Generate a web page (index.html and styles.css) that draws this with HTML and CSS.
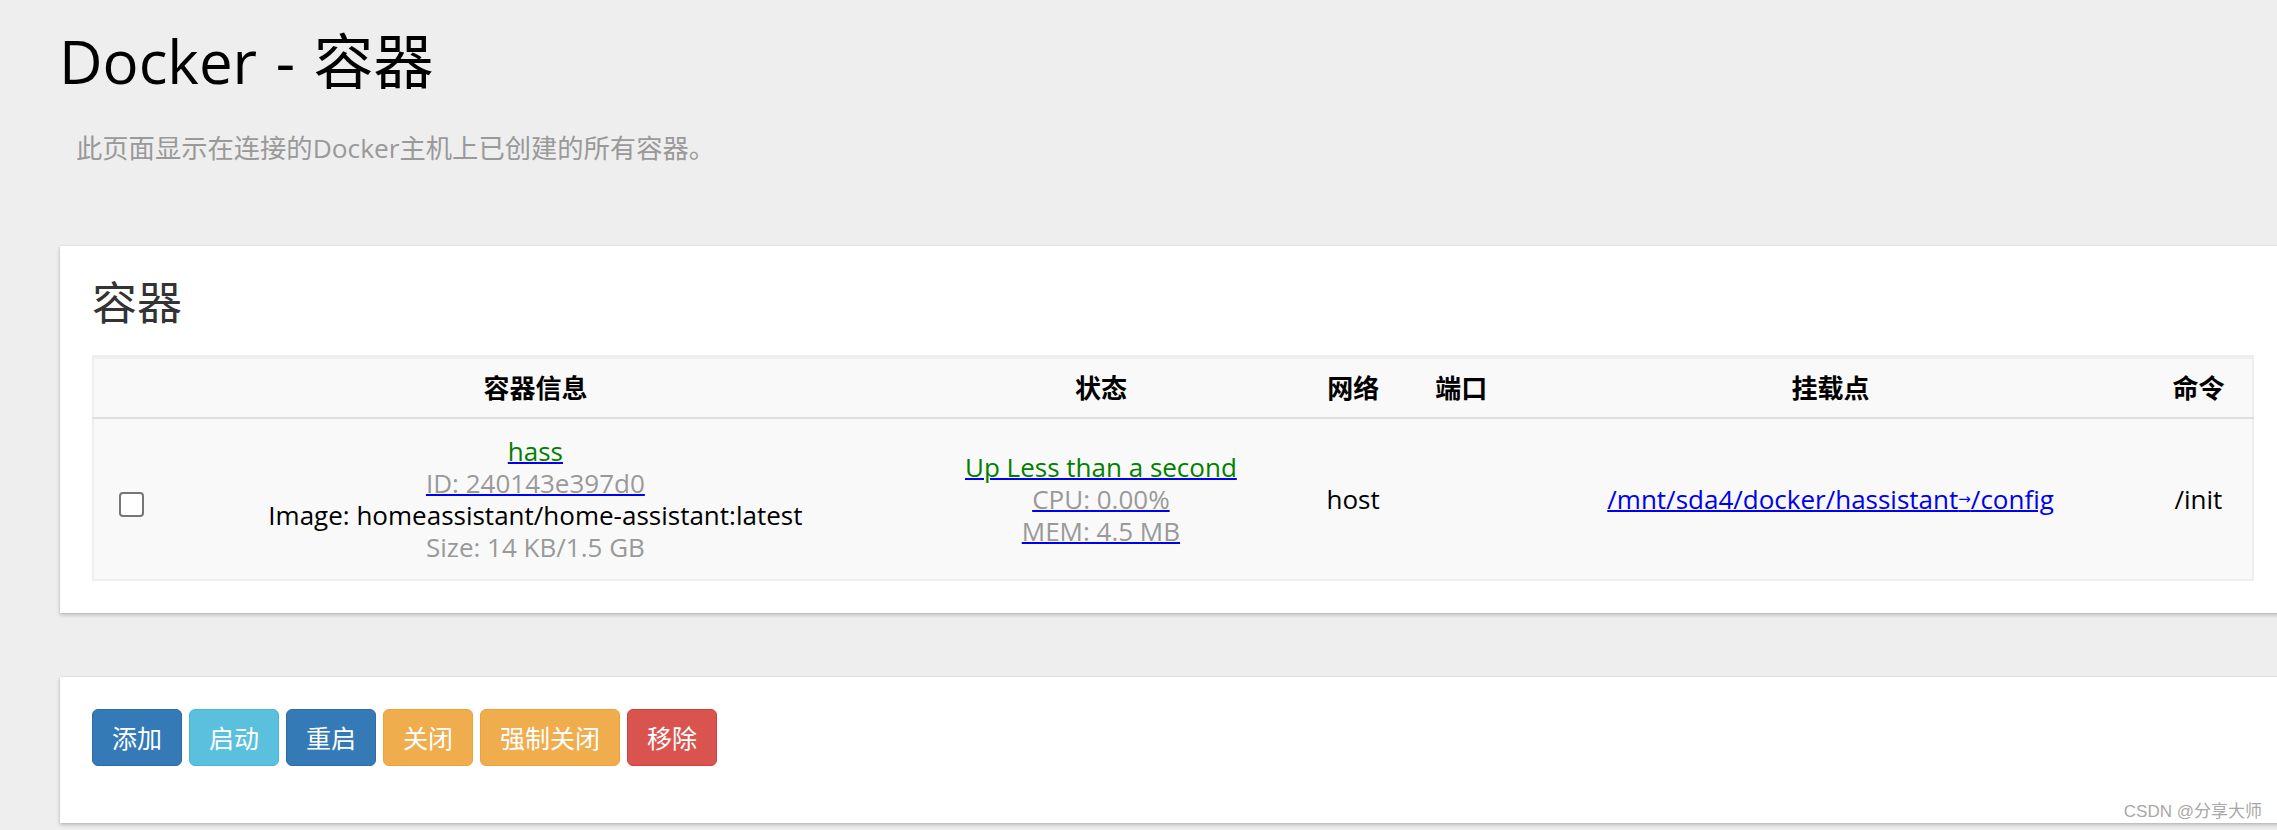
FILE: index.html
```html
<!DOCTYPE html>
<html lang="zh-CN">
<head>
<meta charset="utf-8">
<title>Docker - 容器</title>
<link rel="stylesheet" href="styles.css">
</head>
<body>
<div class="page">
  <h1 class="title">Docker - 容器</h1>
  <p class="subtitle">此页面显示在连接的Docker主机上已创建的所有容器。</p>

  <div class="card">
    <h3 class="card-title">容器</h3>
    <table class="tbl">
      <colgroup>
        <col class="c0"><col class="c1"><col class="c2"><col class="c3"><col class="c4"><col class="c5"><col class="c6">
      </colgroup>
      <thead>
        <tr>
          <th></th>
          <th>容器信息</th>
          <th>状态</th>
          <th>网络</th>
          <th>端口</th>
          <th>挂载点</th>
          <th>命令</th>
        </tr>
      </thead>
      <tbody>
        <tr>
          <td><input type="checkbox" class="chk"></td>
          <td>
            <div><a class="lnk" href="#"><span class="green">hass</span></a></div>
            <div><a class="lnk" href="#"><span class="muted">ID: 240143e397d0</span></a></div>
            <div>Image: homeassistant/home-assistant:latest</div>
            <div class="muted">Size: 14 KB/1.5 GB</div>
          </td>
          <td>
            <div><a class="lnk" href="#"><span class="green">Up Less than a second</span></a></div>
            <div><a class="lnk" href="#"><span class="muted">CPU: 0.00%</span></a></div>
            <div><a class="lnk" href="#"><span class="muted">MEM: 4.5 MB</span></a></div>
          </td>
          <td>host</td>
          <td></td>
          <td><a class="lnk" href="#">/mnt/sda4/docker/hassistant<span class="arrow">→</span>/config</a></td>
          <td>/init</td>
        </tr>
      </tbody>
    </table>
  </div>

  <div class="card card-actions">
    <div class="btns">
      <button class="btn btn-primary">添加</button>
      <button class="btn btn-info">启动</button>
      <button class="btn btn-primary">重启</button>
      <button class="btn btn-warning">关闭</button>
      <button class="btn btn-warning">强制关闭</button>
      <button class="btn btn-danger">移除</button>
    </div>
  </div>
</div>
<div class="watermark">CSDN @分享大师</div>
</body>
</html>
```

FILE: styles.css
```css
html, body {
  margin: 0;
  padding: 0;
}
body {
  width: 2277px;
  height: 830px;
  overflow: hidden;
  position: relative;
  background: #eeeeee;
  font-family: "Open Sans", "Noto Sans CJK SC", sans-serif;
  color: #000;
}
.page {
  padding: 26px 0 0 60px;
}
.title {
  margin: 0 0 0 -1px;
  font-size: 60px;
  line-height: 70px;
  font-weight: 400;
  color: #000;
  word-spacing: 3px;
}
.subtitle {
  margin: 34px 0 0 0;
  padding-left: 16px;
  font-size: 26.3px;
  line-height: 36px;
  color: #999;
}
.card {
  width: 2226px;
  box-sizing: border-box;
  background: #fff;
  padding: 32px;
  margin-top: 80px;
  box-shadow: 0 2px 4px rgba(0, 0, 0, 0.22), 0 0 2px rgba(0, 0, 0, 0.08);
}
.card-title {
  margin: 0;
  font-size: 45px;
  line-height: 50px;
  font-weight: 400;
  color: #333;
}
.tbl {
  margin-top: 27px;
  width: 2162px;
  table-layout: fixed;
  border-collapse: collapse;
  border: 2px solid #eeeeee;
  border-top-width: 4px;
}
.c0 { width: 76px; }
.c1 { width: 732px; }
.c2 { width: 398px; }
.c3 { width: 106px; }
.c4 { width: 110px; }
.c5 { width: 628px; }
.c6 { width: 108px; }
.tbl th {
  background: #f9f9f9;
  padding: 13px 0;
  font-size: 26px;
  line-height: 32px;
  font-weight: 700;
  text-align: center;
  border-bottom: 2px solid #dddddd;
}
.tbl td {
  background: #f9f9f9;
  padding: 16px 0;
  font-size: 26px;
  line-height: 32px;
  text-align: center;
  vertical-align: middle;
  border-bottom: 2px solid #eeeeee;
}
.chk {
  -webkit-appearance: none;
  appearance: none;
  display: block;
  width: 25px;
  height: 25px;
  box-sizing: border-box;
  margin: 10px auto 0;
  border: 2px solid #767676;
  border-radius: 4px;
  background: #fff;
}
.lnk {
  color: #0000ee;
  text-decoration: underline;
  text-decoration-thickness: 2px;
}
.green { color: #008000; }
.muted { color: #999; }
.arrow {
  font-family: "DejaVu Sans", sans-serif;
  font-size: 15px;
  vertical-align: 5px;
}
.card-actions {
  margin-top: 64px;
  padding-bottom: 57px;
}
.btns {
  display: flex;
  gap: 7px;
}
.btn {
  font-family: "Noto Sans CJK SC", sans-serif;
  font-size: 25px;
  line-height: 35px;
  padding: 10px 19px;
  border: 1px solid transparent;
  border-radius: 6px;
  color: #fff;
  margin: 0;
}
.btn-primary { background: #337ab7; border-color: #2e6da4; }
.btn-info { background: #5bc0de; border-color: #46b8da; }
.btn-warning { background: #f0ad4e; border-color: #eea236; }
.btn-danger { background: #d9534f; border-color: #d43f3a; }
.watermark {
  position: absolute;
  right: 15px;
  top: 800px;
  font-family: "Liberation Sans", "Noto Sans CJK SC", sans-serif;
  font-size: 17px;
  line-height: 24px;
  color: #a8a8a8;
}
```
